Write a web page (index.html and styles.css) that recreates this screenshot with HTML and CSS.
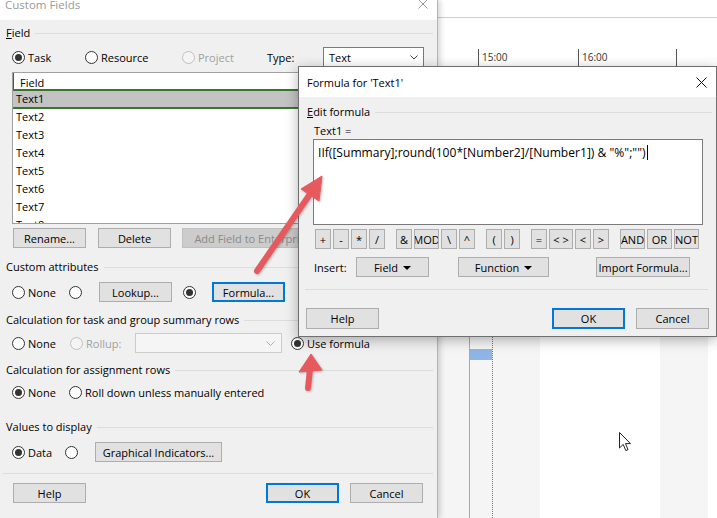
FILE: index.html
```html
<!DOCTYPE html>
<html lang="en">
<head>
  <meta charset="UTF-8">
  <title>Custom Fields - Formula</title>
  <link rel="stylesheet" href="styles.css">
</head>
<body>
<div class="screen">

  <!-- Custom Fields dialog -->
  <div class="custom">
    <div class="titlebar">
      <span class="title">Custom Fields</span>
      <svg class="close" width="10" height="10" viewBox="0 0 10 10"><path d="M0.5 0.5 L9.5 9.5 M9.5 0.5 L0.5 9.5" stroke="#9a9a9a" stroke-width="1"/></svg>
    </div>

    <div class="sect s-field"><span><u>F</u>ield</span><i class="rule"></i></div>
    <div class="row row-type">
      <label class="opt"><span class="radio on"></span>Task</label>
      <label class="opt"><span class="radio"></span>Resource</label>
      <label class="opt off"><span class="radio"></span>Project</label>
      <span class="lbl">Type:</span>
      <div class="select"><span>Text</span>
        <svg width="8" height="5" viewBox="0 0 8 5"><polyline points="0.5,0.5 4,4 7.5,0.5" fill="none" stroke="#444"/></svg>
      </div>
    </div>

    <div class="list">
      <div class="list-head">Field</div>
      <div class="list-row sel">Text1</div>
      <div class="list-row">Text2</div>
      <div class="list-row">Text3</div>
      <div class="list-row">Text4</div>
      <div class="list-row">Text5</div>
      <div class="list-row">Text6</div>
      <div class="list-row">Text7</div>
      <div class="list-row">Text8</div>
    </div>

    <div class="row row-listbtns">
      <button class="btn">Rename...</button>
      <button class="btn">Delete</button>
      <button class="btn wide disabled">Add Field to Enterprise...</button>
    </div>

    <div class="sect s-attr"><span>Custom attributes</span><i class="rule"></i></div>
    <div class="row row-attr">
      <label class="opt"><span class="radio"></span>None</label>
      <label class="opt"><span class="radio"></span></label>
      <button class="btn">Lookup...</button>
      <label class="opt"><span class="radio on"></span></label>
      <button class="btn default">Formula...</button>
    </div>

    <div class="sect s-sum"><span>Calculation for task and group summary rows</span><i class="rule"></i></div>
    <div class="row row-sum">
      <label class="opt"><span class="radio"></span>None</label>
      <label class="opt off"><span class="radio"></span>Rollup:</label>
      <div class="combo">
        <svg width="9" height="5" viewBox="0 0 9 5"><polyline points="0.5,0.5 4.5,4.5 8.5,0.5" fill="none" stroke="#b0b0b0"/></svg>
      </div>
      <label class="opt"><span class="radio on"></span>Use formula</label>
    </div>

    <div class="sect s-assign"><span>Calculation for assignment rows</span><i class="rule"></i></div>
    <div class="row row-assign">
      <label class="opt"><span class="radio on"></span>None</label>
      <label class="opt"><span class="radio"></span>Roll down unless manually entered</label>
    </div>

    <div class="sect s-values"><span>Values to display</span><i class="rule"></i></div>
    <div class="row row-values">
      <label class="opt"><span class="radio on"></span>Data</label>
      <label class="opt"><span class="radio"></span></label>
      <button class="btn gfx">Graphical Indicators...</button>
    </div>

    <div class="sep"></div>
    <div class="row row-bottom">
      <button class="btn">Help</button>
      <button class="btn default">OK</button>
      <button class="btn">Cancel</button>
    </div>
  </div>

  <!-- Gantt chart behind the dialogs -->
  <div class="gantt">
    <div class="g-top"></div>
    <div class="g-scale">
      <span class="tick-pad"></span>
      <span class="tick">15:00</span>
      <span class="tick t2">16:00</span>
      <span class="tick t3"></span>
    </div>
    <div class="g-body">
      <div class="col shade c1"></div>
      <div class="col c2"></div>
      <div class="col shade c3"></div>
      <div class="col c4"></div>
      <i class="status-line"></i>
      <i class="dot-line"></i>
      <i class="bar"></i>
    </div>
  </div>

  <!-- Formula dialog -->
  <div class="formula">
    <div class="f-title">
      <span>Formula for 'Text1'</span>
      <svg width="11" height="11" viewBox="0 0 11 11"><path d="M0.5 0.5 L10.5 10.5 M10.5 0.5 L0.5 10.5" stroke="#111" stroke-width="1"/></svg>
    </div>
    <div class="sect f-sect"><span><u>E</u>dit formula</span><i class="rule"></i></div>
    <div class="f-label">Text1 =</div>
    <div class="editor">IIf([Summary];round(100*[Number2]/[Number1]) &amp; "%";"")<span class="caret"></span></div>

    <div class="calc">
      <div class="cgroup">
        <button class="cbtn">+</button>
        <button class="cbtn">-</button>
        <button class="cbtn">*</button>
        <button class="cbtn">/</button>
      </div>
      <div class="cgroup">
        <button class="cbtn">&amp;</button>
        <button class="cbtn w25">MOD</button>
        <button class="cbtn">\</button>
        <button class="cbtn">^</button>
      </div>
      <div class="cgroup">
        <button class="cbtn">(</button>
        <button class="cbtn">)</button>
      </div>
      <div class="cgroup">
        <button class="cbtn">=</button>
        <button class="cbtn w24">&lt; &gt;</button>
        <button class="cbtn">&lt;</button>
        <button class="cbtn">&gt;</button>
      </div>
      <div class="cgroup">
        <button class="cbtn w25">AND</button>
        <button class="cbtn w25">OR</button>
        <button class="cbtn w25">NOT</button>
      </div>
    </div>

    <div class="insert">
      <span>Insert:</span>
      <button class="btn drop">Field <i class="tri"></i></button>
      <button class="btn drop fn">Function <i class="tri"></i></button>
      <button class="btn imp">Import Formula...</button>
    </div>

    <div class="f-sep"></div>
    <div class="f-bottom">
      <button class="btn">Help</button>
      <button class="btn default">OK</button>
      <button class="btn">Cancel</button>
    </div>
  </div>

  <!-- annotation arrows -->
  <svg class="marks" width="717" height="518" viewBox="0 0 717 518">
    <g fill="#e65a5e" stroke="#e65a5e" stroke-linejoin="round">
      <line x1="257" y1="271" x2="310" y2="194" stroke-width="6" stroke-linecap="round"/>
      <polygon points="322,176 301,189 319,201" stroke-width="1"/>
      <line x1="308" y1="388" x2="310" y2="369" stroke-width="6" stroke-linecap="round"/>
      <polygon points="311,354 299,372 322,370" stroke-width="1"/>
    </g>
  </svg>

  <svg class="cursor" width="13" height="20" viewBox="0 0 13 20">
    <path d="M0.5 0.5 L0.5 16 L4.2 12.4 L6.8 18.6 L9 17.6 L6.5 11.6 L11.5 11.6 Z" fill="#fff" stroke="#222" stroke-width="1" stroke-linejoin="round"/>
  </svg>
</div>
</body>
</html>
```

FILE: styles.css
```css
* {
  box-sizing: border-box;
}

body {
  margin: 0;
  font-family: "Open Sans", "Noto Sans", sans-serif;
  font-size: 11px;
  color: #000;
}

.screen {
  position: relative;
  width: 717px;
  height: 518px;
  overflow: hidden;
  display: flex;
  background: #fff;
}

/* Shared controls */
.btn {
  height: 20px;
  width: 73px;
  padding: 0;
  border: 1px solid #adadad;
  background: #e1e1e1;
  font: inherit;
  color: #000;
  display: flex;
  align-items: center;
  justify-content: center;
  white-space: nowrap;
  overflow: hidden;
}
.btn.default {
  border: 2px solid #0078d7;
}
.btn.disabled {
  background: #cccccc;
  border-color: #bfbfbf;
  color: #8a8a8a;
}

.opt {
  display: flex;
  align-items: center;
  gap: 3px;
  white-space: nowrap;
}
.opt.off {
  color: #a0a0a0;
}
.radio {
  width: 13px;
  height: 13px;
  flex: none;
  border: 1px solid #333;
  border-radius: 50%;
  background: #fff;
  display: flex;
  align-items: center;
  justify-content: center;
}
.radio.on::after {
  content: "";
  width: 7px;
  height: 7px;
  border-radius: 50%;
  background: #333;
}
.opt.off .radio {
  border-color: #c0c0c0;
  background: #f4f4f4;
}

.sect {
  display: flex;
  align-items: center;
  height: 14px;
  line-height: 14px;
  padding: 0 4px 0 6px;
  white-space: nowrap;
}
.sect .rule {
  flex: 1;
  height: 1px;
  margin-left: 5px;
  background: #dcdcdc;
}

.row {
  display: grid;
  align-items: center;
  height: 20px;
  padding-left: 12px;
}

/* Custom Fields dialog */
.custom {
  position: relative;
  z-index: 1;
  flex: none;
  width: 438px;
  height: 518px;
  background: #f0f0f0;
  border-right: 1px solid #b4b4b4;
  box-shadow: 2px 0 6px rgba(0, 0, 0, 0.18);
}

.titlebar {
  height: 20px;
  background: #fff;
  overflow: hidden;
  display: flex;
  justify-content: space-between;
}
.titlebar .title {
  margin: -1px 0 0 5px;
  font-size: 11.5px;
  line-height: 12px;
  color: #999;
}
.titlebar .close {
  margin: -1px 9px 0 0;
}

.s-field { margin-top: 6px; }

.row-type {
  margin-top: 7px;
  grid-template-columns: 73px 97px 85px 56px 101px;
}
.select {
  height: 20px;
  border: 1px solid #7a7a7a;
  background: #fff;
  display: flex;
  align-items: center;
  justify-content: space-between;
  padding: 0 5px;
}

.list {
  margin: 5px 0 0 12px;
  width: 420px;
  height: 152px;
  border: 1px solid #a0a0a0;
  background: #fff;
  overflow: hidden;
}
.list-head {
  height: 17px;
  padding: 2px 0 0 6px;
  line-height: 15px;
  border-left: 1px solid #555;
  margin-bottom: -1px;
}
.list-row {
  height: 18px;
  line-height: 18px;
  padding-left: 3px;
}
.list-row.sel {
  height: 20px;
  margin-bottom: -1px;
  border-top: 2px solid #3a7530;
  border-bottom: 2px solid #3a7530;
  background: #c3c3c3;
  line-height: 16px;
}

.row-listbtns {
  margin-top: 4px;
  padding-left: 13px;
  grid-template-columns: 85px 84px 150px;
}
.btn.wide { width: 150px; }

.s-attr { margin-top: 12px; }
.row-attr {
  margin-top: 8px;
  grid-template-columns: 57px 30px 84px 29px 73px;
}

.s-sum { margin-top: 11px; }
.row-sum {
  margin-top: 6px;
  grid-template-columns: 58px 65px 156px auto;
}
.combo {
  width: 147px;
  height: 20px;
  border: 1px solid #cccccc;
  background: #f5f5f5;
  display: flex;
  align-items: center;
  justify-content: flex-end;
  padding-right: 6px;
}

.s-assign { margin-top: 10px; }
.row-assign {
  margin-top: 5px;
  grid-template-columns: 57px auto;
}

.s-values { margin-top: 18px; }
.row-values {
  margin-top: 8px;
  grid-template-columns: 53px 30px 127px;
}
.btn.gfx { width: 127px; }

.sep {
  margin: 11px 4px 0 3px;
  height: 1px;
  background: #dcdcdc;
}
.row-bottom {
  margin-top: 9px;
  padding-left: 13px;
  grid-template-columns: 253px 84px 73px;
}

/* Gantt behind */
.gantt {
  flex: 1;
  display: flex;
  flex-direction: column;
}
.g-top {
  height: 18px;
  border-bottom: 1px solid #cfcfcf;
}
.g-scale {
  height: 49px;
  display: flex;
  align-items: flex-end;
  border-bottom: 1px solid #a0a0a0;
}
.tick-pad {
  width: 40px;
}
.tick {
  width: 100px;
  height: 17px;
  line-height: 17px;
  padding-left: 3px;
  border-left: 1px solid #555;
  font-size: 10px;
  color: #333;
}
.tick.t2 { width: 98px; }
.tick.t3 { width: 41px; }

.g-body {
  position: relative;
  flex: 1;
  display: flex;
}
.col { height: 100%; }
.col.shade { background: #f5f5f5; }
.c1 { width: 102px; }
.c2 { width: 120px; }
.c3 { width: 48px; }
.c4 { flex: 1; }

.status-line {
  position: absolute;
  left: 31px;
  top: 0;
  bottom: 0;
  width: 1px;
  background: #7fc77f;
}
.dot-line {
  position: absolute;
  left: 54px;
  top: 0;
  bottom: 0;
  border-left: 1px dotted #777;
}
.bar {
  position: absolute;
  left: 32px;
  top: 282px;
  width: 22px;
  height: 11px;
  background: #8db6e6;
}

/* Formula dialog */
.formula {
  position: absolute;
  z-index: 3;
  left: 298px;
  top: 66px;
  width: 419px;
  height: 271px;
  background: #f0f0f0;
  border: 1px solid #6f6f6f;
  box-shadow: 0 3px 12px rgba(0, 0, 0, 0.3);
}
.f-title {
  height: 30px;
  background: #fff;
  display: flex;
  align-items: center;
  justify-content: space-between;
  padding: 0 9px 0 8px;
}
.f-sect {
  margin-top: 8px;
  padding-left: 8px;
}
.f-label {
  margin: 5px 0 0 15px;
  line-height: 14px;
}
.editor {
  margin: 1px 0 0 14px;
  width: 390px;
  height: 86px;
  padding: 5px 4px;
  border: 1px solid #7a7a7a;
  background: #fff;
  font-size: 12.1px;
  line-height: 16px;
  white-space: nowrap;
}
.caret {
  display: inline-block;
  width: 1px;
  height: 15px;
  margin-left: 1px;
  vertical-align: -3px;
  background: #000;
}

.calc {
  margin: 4px 0 0 16px;
  display: flex;
  gap: 11px;
}
.cgroup {
  display: flex;
  gap: 2px;
}
.cbtn {
  width: 16px;
  height: 20px;
  padding: 0;
  border: 1px solid #adadad;
  background: #e1e1e1;
  font: inherit;
  color: #000;
  display: flex;
  align-items: center;
  justify-content: center;
  overflow: hidden;
  white-space: nowrap;
}
.cbtn.w24 { width: 24px; }
.cbtn.w25 { width: 25px; }

.insert {
  margin: 8px 0 0 15px;
  display: grid;
  grid-template-columns: 42px 102px 138px 94px;
  align-items: center;
}
.btn.fn { width: 91px; }
.btn.imp { width: 94px; }
.btn.drop { gap: 5px; }
.tri {
  width: 0;
  height: 0;
  border-left: 4px solid transparent;
  border-right: 4px solid transparent;
  border-top: 4px solid #000;
  margin-top: 2px;
}

.f-sep {
  margin: 12px 0 0 6px;
  width: 403px;
  height: 1px;
  background: #dcdcdc;
}
.f-bottom {
  margin: 18px 0 0 7px;
  display: grid;
  grid-template-columns: 246px 84px 73px;
}
.f-bottom .btn { height: 21px; }

/* Overlays */
.marks {
  position: absolute;
  z-index: 4;
  left: 0;
  top: 0;
  pointer-events: none;
  filter: drop-shadow(1px 1px 1px rgba(0, 0, 0, 0.25));
}
.cursor {
  position: absolute;
  z-index: 4;
  left: 619px;
  top: 432px;
}
```
